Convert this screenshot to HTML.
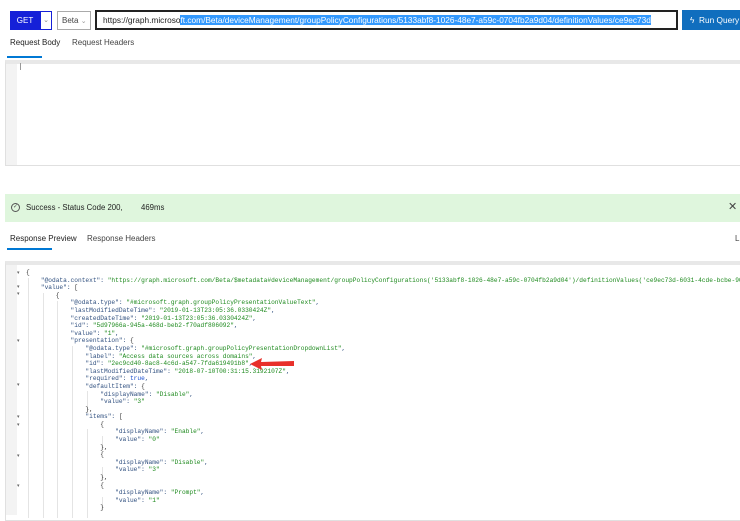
<!DOCTYPE html>
<html><head><meta charset="utf-8"><style>
*{margin:0;padding:0;box-sizing:border-box}
body{width:740px;height:510px;overflow:hidden;background:#fff;font-family:"Liberation Sans",sans-serif;position:relative;color:#333}
.a{position:absolute}
.code{position:absolute;left:0;font-family:"Liberation Mono",monospace;font-size:6.2px;line-height:7.6px;white-space:pre;color:#2f4f7f}
.s{color:#1e8a1e}.b{color:#1a4fd0}.p{color:#333}
.g{position:absolute;left:17px;font-size:5px;color:#666}
.v{position:absolute;width:1px;background:#e4e4e4}
</style></head><body>
<div class="a" style="left:10px;top:11px;width:30px;height:19px;background:#1520d8;color:#fff;font-size:8px;text-align:center;line-height:19px">GET</div>
<div class="a" style="left:40px;top:11px;width:12px;height:19px;border:1px solid #1520d8;color:#888;font-size:7px;text-align:center;line-height:17px">⌄</div>
<div class="a" style="left:57px;top:11px;width:34px;height:19px;border:1px solid #aaa;font-size:8px;line-height:17px;padding-left:4px;color:#444">Beta <span style="color:#999;font-size:7px">⌄</span></div>
<div class="a" style="left:95px;top:10px;width:583px;height:20px;border:2px solid #222;font-size:8.3px;line-height:16px;padding-left:6px;color:#222;white-space:nowrap;overflow:hidden">https://graph.microso<span style="background:#3399ff;color:#fff">ft.com/Beta/deviceManagement/groupPolicyConfigurations/5133abf8-1026-48e7-a59c-0704fb2a9d04/definitionValues/ce9ec73d</span></div>
<div class="a" style="left:682px;top:10px;width:60px;height:20px;background:#106ebe;color:#fff;font-size:8.3px;line-height:20px;padding-left:8px;white-space:nowrap">ϟ&nbsp; Run Query</div>
<div class="a" style="left:10px;top:38px;font-size:8px;color:#222">Request Body</div>
<div class="a" style="left:72px;top:38px;font-size:8px;color:#444">Request Headers</div>
<div class="a" style="left:7px;top:56px;width:35px;height:2px;background:#0078d4"></div>
<div class="a" style="left:5px;top:60px;width:740px;height:106px;border:1px solid #e0e0e0;border-top:4px solid #e8e8e8"></div>
<div class="a" style="left:6px;top:64px;width:11px;height:101px;background:#f3f3f3"></div>
<div class="a" style="left:20px;top:63px;width:1px;height:7px;background:#999"></div>
<div class="a" style="left:5px;top:194px;width:740px;height:28px;background:#dff6dd"></div>
<div class="a" style="left:11px;top:203px;width:9px;height:9px;border:1px solid #555;border-radius:50%;font-size:6px;line-height:7px;text-align:center;color:#555">✓</div>
<div class="a" style="left:26px;top:203px;font-size:7.8px;color:#222">Success - Status Code 200,</div>
<div class="a" style="left:141px;top:203px;font-size:7.8px;color:#222">469ms</div>
<div class="a" style="left:728px;top:200px;font-size:11px;color:#444">✕</div>
<div class="a" style="left:10px;top:234px;font-size:8px;color:#222">Response Preview</div>
<div class="a" style="left:87px;top:234px;font-size:8px;color:#444">Response Headers</div>
<div class="a" style="left:735px;top:234px;font-size:8px;color:#444">L</div>
<div class="a" style="left:7px;top:248px;width:45px;height:2px;background:#0078d4"></div>
<div class="a" style="left:5px;top:261px;width:740px;height:260px;border:1px solid #e0e0e0;border-top:4px solid #e8e8e8"></div>
<div class="a" style="left:6px;top:265px;width:11px;height:250px;background:#f3f3f3"></div>
<div class="v" style="left:28px;top:278px;height:240px"></div>
<div class="v" style="left:43px;top:293px;height:225px"></div>
<div class="v" style="left:57px;top:301px;height:217px"></div>
<div class="v" style="left:72px;top:346px;height:172px"></div>
<div class="v" style="left:87px;top:391px;height:22px"></div>
<div class="v" style="left:87px;top:429px;height:89px"></div>
<div class="v" style="left:102px;top:436px;height:14px"></div>
<div class="v" style="left:102px;top:467px;height:14px"></div>
<div class="v" style="left:102px;top:497px;height:14px"></div>
<div class="a" style="left:0;top:269px;width:740px;height:245px">
<div class="g" style="top:1px">▾</div><div class="g" style="top:15px">▾</div><div class="g" style="top:22px">▾</div><div class="g" style="top:69px">▾</div><div class="g" style="top:113px">▾</div><div class="g" style="top:145px">▾</div><div class="g" style="top:153px">▾</div><div class="g" style="top:184px">▾</div><div class="g" style="top:214px">▾</div>
<div class="code" style="left:26px;top:0"><span class="p">{</span>
    "@odata.context": <span class="s">"https://graph.microsoft.com/Beta/$metadata#deviceManagement/groupPolicyConfigurations('5133abf8-1026-48e7-a59c-0704fb2a9d04')/definitionValues('ce9ec73d-6031-4cde-bcbe-900b2</span>
    "value": <span class="p">[</span>
        <span class="p">{</span>
            "@odata.type": <span class="s">"#microsoft.graph.groupPolicyPresentationValueText"</span>,
            "lastModifiedDateTime": <span class="s">"2019-01-13T23:05:36.0330424Z"</span>,
            "createdDateTime": <span class="s">"2019-01-13T23:05:36.0330424Z"</span>,
            "id": <span class="s">"5d97966a-945a-468d-beb2-f70adf806092"</span>,
            "value": <span class="s">"1"</span>,
            "presentation": <span class="p">{</span>
                "@odata.type": <span class="s">"#microsoft.graph.groupPolicyPresentationDropdownList"</span>,
                "label": <span class="s">"Access data sources across domains"</span>,
                "id": <span class="s">"2ec9cd40-8ac8-4c6d-a547-7fda619491b8"</span>,
                "lastModifiedDateTime": <span class="s">"2018-07-10T00:31:15.3192107Z"</span>,
                "required": <span class="b">true</span>,
                "defaultItem": <span class="p">{</span>
                    "displayName": <span class="s">"Disable"</span>,
                    "value": <span class="s">"3"</span>
                <span class="p">},</span>
                "items": <span class="p">[</span>
                    <span class="p">{</span>
                        "displayName": <span class="s">"Enable"</span>,
                        "value": <span class="s">"0"</span>
                    <span class="p">},</span>
                    <span class="p">{</span>
                        "displayName": <span class="s">"Disable"</span>,
                        "value": <span class="s">"3"</span>
                    <span class="p">},</span>
                    <span class="p">{</span>
                        "displayName": <span class="s">"Prompt"</span>,
                        "value": <span class="s">"1"</span>
                    <span class="p">}</span></div>
</div>
<svg class="a" style="left:248px;top:357px" width="50" height="14"><polygon points="2,7 14,1 13,5 46,4 46,9 13,9 14,13" fill="#e8302a"/></svg>
</body></html>
